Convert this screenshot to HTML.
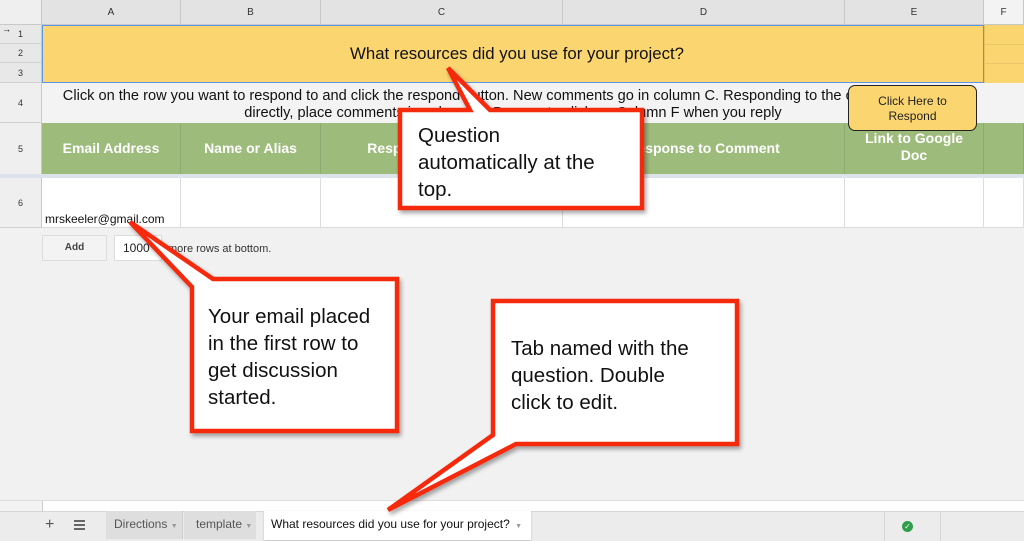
<!DOCTYPE html>
<html><head><meta charset="utf-8"><style>
*{margin:0;padding:0;box-sizing:border-box}
body{width:1024px;height:541px;overflow:hidden;background:#f1f1f1;font-family:"Liberation Sans",Arial,sans-serif;position:relative}
.a{position:absolute}
.hd{background:#e3e3e3;color:#333;font-size:10px;text-align:center;border-right:1px solid #c8c8c8;border-bottom:1px solid #c8c8c8}
.rn{background:#e8e8e8;color:#333;font-size:9px;text-align:center;border-bottom:1px solid #d0d0d0;border-right:1px solid #c8c8c8}
.g{background:#9dbb7b;color:#fff;font-weight:bold;font-size:14px;display:flex;align-items:center;justify-content:center;text-align:center;border-right:1px solid #8eaa6e;line-height:17px;white-space:nowrap;overflow:hidden}
.w{background:#fff;border-right:1px solid #dcdcdc;border-bottom:1px solid #dcdcdc}
</style></head><body>
<div class="a hd" style="left:0;top:0;width:42px;height:25px;background:#efefef"></div>
<div class="a hd" style="left:42px;top:0;width:139px;height:25px;line-height:25px">A</div>
<div class="a hd" style="left:181px;top:0;width:140px;height:25px;line-height:25px">B</div>
<div class="a hd" style="left:321px;top:0;width:242px;height:25px;line-height:25px">C</div>
<div class="a hd" style="left:563px;top:0;width:282px;height:25px;line-height:25px">D</div>
<div class="a hd" style="left:845px;top:0;width:139px;height:25px;line-height:25px">E</div>
<div class="a hd" style="left:984px;top:0;width:40px;height:25px;line-height:25px;background:#f3f3f3">F</div>
<div class="a rn" style="left:0;top:25px;width:42px;height:19px;line-height:19px">1</div>
<div class="a rn" style="left:0;top:44px;width:42px;height:19px;line-height:19px">2</div>
<div class="a rn" style="left:0;top:63px;width:42px;height:20px;line-height:20px">3</div>
<div class="a rn" style="left:0;top:83px;width:42px;height:40px;line-height:40px;background:#efefef">4</div>
<div class="a rn" style="left:0;top:123px;width:42px;height:52px;line-height:52px;background:#efefef">5</div>
<div class="a rn" style="left:0;top:178px;width:42px;height:50px;line-height:50px;background:#efefef">6</div>
<div class="a" style="left:2px;top:24px;font-size:9px">&#8594;</div>
<div class="a" style="left:42px;top:25px;width:942px;height:58px;background:#fbd570;border:1px solid #5b95e6;padding-left:8px;text-align:center;line-height:56px;font-size:16.8px;color:#111">What resources did you use for your project?</div>
<div class="a" style="left:984px;top:25px;width:40px;height:58px;background:#fbd570;border-left:1px solid #e6c263"></div>
<div class="a" style="left:984px;top:44px;width:40px;height:1px;background:#e8c868"></div>
<div class="a" style="left:984px;top:63px;width:40px;height:1px;background:#e8c868"></div>
<div class="a" style="left:42px;top:83px;width:982px;height:40px;background:#f3f3f3"></div>
<div class="a" style="left:42px;top:88px;width:942px;font-size:14.6px;color:#111;line-height:17px;text-align:center;white-space:nowrap;display:flex;flex-direction:column;align-items:center">
<div>Click on the row you want to respond to and click the respond button. New comments go in column C. Responding to the comments directly</div>
<div>directly, place comments in column D. Be sure to click on Column F when you reply</div></div>
<div class="a g" style="left:42px;top:123px;width:139px;height:51px">Email Address</div>
<div class="a g" style="left:181px;top:123px;width:140px;height:51px">Name or Alias</div>
<div class="a g" style="left:321px;top:123px;width:242px;height:51px">Response to Question</div>
<div class="a g" style="left:563px;top:123px;width:282px;height:51px">Response to Comment</div>
<div class="a g" style="left:845px;top:123px;width:139px;height:51px;align-items:flex-start;padding-top:7px;white-space:normal">Link to Google<br>Doc</div>
<div class="a g" style="left:984px;top:123px;width:40px;height:51px"></div>
<div class="a" style="left:0;top:174px;width:1024px;height:4px;background:#dde3ea"></div>
<div class="a w" style="left:42px;top:178px;width:139px;height:50px;font-size:12px;color:#111;padding:34px 0 0 3px;white-space:nowrap">mrskeeler@gmail.com</div>
<div class="a w" style="left:181px;top:178px;width:140px;height:50px"></div>
<div class="a w" style="left:321px;top:178px;width:242px;height:50px"></div>
<div class="a w" style="left:563px;top:178px;width:282px;height:50px"></div>
<div class="a w" style="left:845px;top:178px;width:139px;height:50px"></div>
<div class="a w" style="left:984px;top:178px;width:40px;height:50px"></div>
<div class="a" style="left:42px;top:235px;width:65px;height:26px;background:#f3f3f3;border:1px solid #ddd;font-size:10px;font-weight:bold;color:#444;text-align:center;line-height:24px">Add</div>
<div class="a" style="left:114px;top:235px;width:48px;height:26px;background:#fff;border:1px solid #ddd;font-size:12px;color:#222;padding:5px 0 0 8px">1000</div>
<div class="a" style="left:168px;top:243px;font-size:11px;color:#333">more rows at bottom.</div>
<div class="a" style="left:848px;top:85px;width:129px;height:46px;background:#fbd570;border:1.5px solid #222;border-radius:7px;font-size:12px;color:#222;text-align:center;line-height:15px;padding-top:8px">Click Here to<br>Respond</div>
<div class="a" style="left:0;top:500px;width:1024px;height:11px;background:#f3f3f3;border-top:1px solid #ddd"></div>
<div class="a" style="left:42px;top:501px;width:982px;height:10px;background:#fff;border-left:1px solid #ccc"></div>
<div class="a" style="left:0;top:511px;width:1024px;height:30px;background:#ececec;border-top:1px solid #d6d6d6"></div>
<div class="a" style="left:45px;top:516px;font-size:16px;color:#555">+</div>
<div class="a" style="left:74px;top:520px;width:11px;height:10px;border-top:2px solid #666;border-bottom:2px solid #666"><div style="margin-top:2px;height:2px;background:#666"></div></div>
<div class="a" style="left:106px;top:511px;width:77px;height:28px;background:#dedede;border-right:1px solid #ccc;font-size:12px;color:#555;line-height:26px;padding-left:8px">Directions <span style="font-size:7px;color:#999">&#9660;</span></div>
<div class="a" style="left:184px;top:511px;width:72px;height:28px;background:#dedede;font-size:12px;color:#555;line-height:26px;padding-left:12px">template <span style="font-size:7px;color:#999">&#9660;</span></div>
<div class="a" style="left:264px;top:511px;width:267px;height:29px;background:#fff;font-size:12px;color:#111;line-height:26px;padding-left:7px;box-shadow:0 1px 2px #bbb">What resources did you use for your project? <span style="font-size:7px;color:#999">&nbsp;&#9660;</span></div>
<div class="a" style="left:884px;top:511px;width:1px;height:30px;background:#d6d6d6"></div>
<div class="a" style="left:940px;top:511px;width:1px;height:30px;background:#d6d6d6"></div>
<div class="a" style="left:902px;top:521px;width:11px;height:11px;border-radius:50%;background:#2f9e4a;color:#fff;font-size:8px;text-align:center;line-height:11px">&#10003;</div>
<svg class="a" style="left:0;top:0" width="1024" height="541">
<defs><filter id="s" x="-10%" y="-10%" width="130%" height="130%"><feDropShadow dx="2" dy="3" stdDeviation="2" flood-color="#000" flood-opacity="0.35"/></filter></defs>
<g fill="#fff" stroke="#f52a10" stroke-width="4.5" stroke-linejoin="miter" filter="url(#s)">
<path d="M400,110 L470,110 L448,68 L490,110 L642,110 L642,208 L400,208 Z"/>
<path d="M130,222 L213,279 L397,279 L397,431 L192,431 L192,287 Z"/>
<path d="M493,301 L737,301 L737,444 L516,444 L388,510 L493,435 Z"/>
</g>
<g font-family="Liberation Sans, Arial, sans-serif" font-size="20.5" fill="#111">
<text x="418" y="142">Question</text>
<text x="418" y="169">automatically at the</text>
<text x="418" y="196">top.</text>
<text x="208" y="323">Your email placed</text>
<text x="208" y="350">in the first row to</text>
<text x="208" y="377">get discussion</text>
<text x="208" y="404">started.</text>
<text x="511" y="355">Tab named with the</text>
<text x="511" y="382">question. Double</text>
<text x="511" y="409">click to edit.</text>
</g>
</svg>
</body></html>
